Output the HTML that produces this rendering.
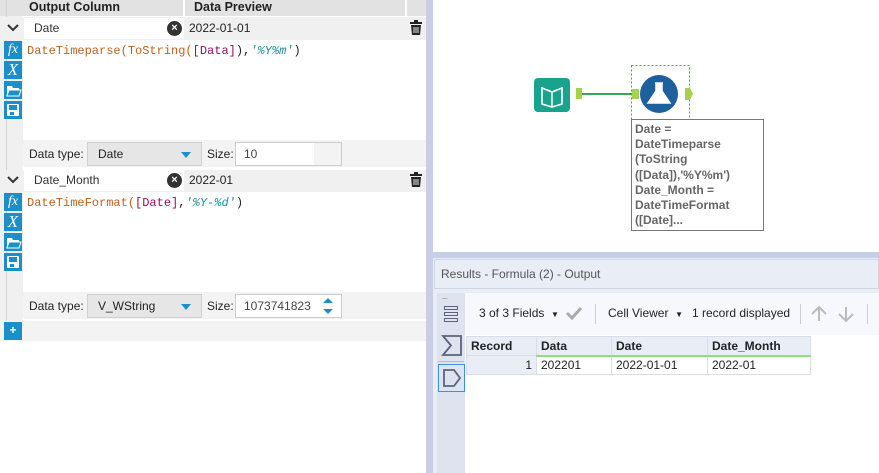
<!DOCTYPE html>
<html><head><meta charset="utf-8"><style>
*{box-sizing:border-box;margin:0;padding:0}
body{width:879px;height:473px;overflow:hidden;background:#fff;font-family:"Liberation Sans",sans-serif;font-size:12px;color:#222;position:relative}
.abs{position:absolute}
.mono{font-family:"Liberation Mono",monospace;font-size:12.5px}
.ib{position:absolute;left:4px;width:18px;height:18px;background:#1a8fc9;color:#fff;font-family:"Liberation Serif",serif;font-style:italic;font-size:14px;text-align:center;line-height:17px}
.sel{position:absolute;height:24px;background:#e6e6e6;border:1px solid #d0d0d0;padding:4px 10px;font-size:12px}
.num{position:absolute;height:24px;background:#fff;border:1px solid #ccc;padding:4px 8px;font-size:12px;color:#444}
.tri{position:absolute;width:0;height:0;border-left:5px solid transparent;border-right:5px solid transparent;border-top:6px solid #1a8fc9}
.xb{position:absolute;width:15px;height:15px;border-radius:50%;background:#333;color:#fff;font-size:11px;line-height:14px;text-align:center;font-weight:bold}
td,th{border:1px solid #d8dde8;padding:1px 4px;font-size:12px;text-align:left;height:19px}
</style></head><body>
<svg width="0" height="0" style="position:absolute"><defs>
<g id="trash"><rect x="1" y="2" width="12" height="2" fill="#222"/><rect x="5" y="0" width="4" height="2" fill="#222"/><path d="M2 5 h10 l-1 10 h-8 z" fill="#222"/><path d="M5 7 v6 M7 7 v6 M9 7 v6" stroke="#fff" stroke-width="0.9"/></g>
<g id="fold"><path d="M3 5 h5 l1 2 h6 v8 h-12 z" fill="#fff"/><path d="M5 9 h12 l-2 6 h-12 z" fill="#1a8fc9" stroke="#fff" stroke-width="1"/></g>
<g id="save"><rect x="3" y="3" width="12" height="12" rx="1" fill="#fff"/><rect x="5" y="4" width="8" height="5" fill="#1a8fc9"/><rect x="6" y="11" width="4" height="3" fill="#1a8fc9"/></g>
<g id="chev"><path d="M3 5 l5 5 l5 -5" fill="none" stroke="#333" stroke-width="2"/></g>
</defs></svg>
<!-- left panel -->
<div class="abs" style="left:0;top:0;width:426px;height:16px;background:#e2e2e2"></div>
<div class="abs" style="left:0;top:16px;width:23px;height:325px;background:#f0f0f0"></div>
<div class="abs" style="left:6px;top:0;width:1px;height:340px;background:#d6d6d6"></div>
<div class="abs" style="left:29px;top:0;font-weight:bold;font-size:12.5px;line-height:14px">Output Column</div>
<div class="abs" style="left:183px;top:0;width:2px;height:16px;background:#fff"></div>
<div class="abs" style="left:194px;top:0;font-weight:bold;font-size:12.5px;line-height:14px">Data Preview</div>
<div class="abs" style="left:405px;top:0;width:2px;height:16px;background:#fff"></div>

<!-- row 1 -->
<div class="abs" style="left:0;top:17px;width:426px;height:23px;background:#f0f0f0"></div>
<svg class="abs" style="left:5px;top:20px" width="16" height="16"><use href="#chev"/></svg>
<div class="abs" style="left:24px;top:18px;width:160px;height:21px;background:#fff;padding:3px 10px;font-size:12px;color:#333">Date</div>
<div class="xb" style="left:167px;top:21px">×</div>
<div class="abs" style="left:189px;top:21px;font-size:12px">2022-01-01</div>
<svg class="abs" style="left:409px;top:20px" width="14" height="16"><use href="#trash"/></svg>
<div class="abs" style="left:23px;top:40px;width:403px;height:100px;background:#fff"></div>
<div class="ib" style="top:41px">fx</div>
<div class="ib" style="top:61px;font-size:17px">X</div>
<svg class="ib" style="top:81px" width="18" height="18"><use href="#fold"/></svg>
<svg class="ib" style="top:101px" width="18" height="18"><use href="#save"/></svg>
<div class="abs mono" style="left:27px;top:44px;font-size:12px"><span style="color:#c0601a">DateTimeparse(ToString(</span><span style="color:#901060">[Data]</span>),<span style="color:#1a8fa0;font-style:italic">'%Y%m'</span>)</div>
<div class="abs" style="left:23px;top:140px;width:403px;height:27px;background:#f3f3f3"></div>
<div class="abs" style="left:29px;top:147px;font-size:12px">Data type:</div>
<div class="sel" style="left:87px;top:142px;width:115px">Date</div>
<div class="tri" style="left:181px;top:152px"></div>
<div class="abs" style="left:207px;top:147px;font-size:12px">Size:</div>
<div class="num" style="left:235px;top:142px;width:107px">10</div>
<div class="abs" style="left:314px;top:143px;width:27px;height:22px;background:#f3f3f3"></div>

<!-- row 2 -->
<div class="abs" style="left:0;top:170px;width:426px;height:22px;background:#f0f0f0"></div>
<svg class="abs" style="left:5px;top:172px" width="16" height="16"><use href="#chev"/></svg>
<div class="abs" style="left:24px;top:170px;width:160px;height:21px;background:#fff;padding:3px 10px;font-size:12px;color:#333">Date_Month</div>
<div class="xb" style="left:167px;top:173px">×</div>
<div class="abs" style="left:189px;top:173px;font-size:12px">2022-01</div>
<svg class="abs" style="left:409px;top:172px" width="14" height="16"><use href="#trash"/></svg>
<div class="ib" style="top:193px">fx</div>
<div class="ib" style="top:213px;font-size:17px">X</div>
<svg class="ib" style="top:233px" width="18" height="18"><use href="#fold"/></svg>
<svg class="ib" style="top:253px" width="18" height="18"><use href="#save"/></svg>
<div class="abs mono" style="left:27px;top:196px;font-size:12px"><span style="color:#c0601a">DateTimeFormat(</span><span style="color:#901060">[Date]</span>,<span style="color:#1a8fa0;font-style:italic">'%Y-%d'</span>)</div>
<div class="abs" style="left:23px;top:292px;width:403px;height:27px;background:#f3f3f3"></div>
<div class="abs" style="left:29px;top:299px;font-size:12px">Data type:</div>
<div class="sel" style="left:87px;top:294px;width:115px">V_WString</div>
<div class="tri" style="left:181px;top:304px"></div>
<div class="abs" style="left:207px;top:299px;font-size:12px">Size:</div>
<div class="num" style="left:235px;top:294px;width:107px">1073741823</div>
<div class="tri" style="left:323px;top:298px;border-top:none;border-bottom:5px solid #1a8fc9"></div>
<div class="tri" style="left:323px;top:309px;border-top:5px solid #1a8fc9"></div>
<div class="abs" style="left:0;top:321px;width:426px;height:20px;background:#f3f3f3"></div>
<div class="abs" style="left:4px;top:322px;width:18px;height:18px;background:#1a8fc9;color:#fff;text-align:center;font-weight:bold;line-height:17px">+</div>

<!-- dividers -->
<div class="abs" style="left:426px;top:0;width:7px;height:473px;background:#c6cfe6"></div>
<div class="abs" style="left:433px;top:252px;width:446px;height:6px;background:#c6cfe6"></div>

<!-- canvas -->
<svg class="abs" style="left:520px;top:60px" width="200" height="172">
<rect x="14" y="18" width="36" height="34" rx="4" fill="#1aa38c"/>
<path d="M22 28 L32 32 L42 28 L42 44 L32 47 L22 44 Z" fill="none" stroke="#fff" stroke-width="1.6"/>
<line x1="32" y1="32" x2="32" y2="47" stroke="#fff" stroke-width="1.4"/>
<rect x="56" y="28" width="6" height="11" fill="#a8d04a"/>
<line x1="62" y1="34" x2="114" y2="34" stroke="#3aa55a" stroke-width="2"/>
<rect x="112" y="29" width="7" height="10" fill="#a8d04a"/>
<rect x="111.5" y="5.5" width="58" height="55" fill="none" stroke="#3d8fe0" stroke-dasharray="2,2"/>
<circle cx="139" cy="34" r="19" fill="#1e5f9e"/>
<path d="M135 23 h8 M136 23 v8 l-8 12 h22 l-8 -12 v-8" fill="#fff" stroke="#fff" stroke-width="1.5"/>
<path d="M165 28 h5 l3 6 l-3 6 h-5 z" fill="#a8d04a"/>
</svg>
<div class="abs" style="left:631px;top:119px;width:133px;height:112px;border:1px solid #777;background:#fff;padding:2px 3px;font-size:12px;line-height:15.2px;color:#666;font-weight:bold">Date =<br>DateTimeparse<br>(ToString<br>([Data]),'%Y%m')<br>Date_Month =<br>DateTimeFormat<br>([Date]...</div>

<!-- results -->
<div class="abs" style="left:433px;top:258px;width:446px;height:215px;background:#e9edf6"></div>
<div class="abs" style="left:434px;top:259px;width:445px;height:30px;border:1px solid #cfd5e2;background:#e9edf6;padding:7px 6px;color:#555;font-size:12px">Results - Formula (2) - Output</div>
<div class="abs" style="left:437px;top:293px;width:28px;height:180px;background:#dde3ef"></div>
<div class="abs" style="left:441px;top:292px;font-size:8px;color:#999;letter-spacing:-1px">.....</div>
<div class="abs" style="left:444px;top:306px;width:14px;height:4px;border:1.5px solid #5a6478"></div>
<div class="abs" style="left:444px;top:312px;width:14px;height:4px;border:1.5px solid #5a6478"></div>
<div class="abs" style="left:444px;top:318px;width:14px;height:4px;border:1.5px solid #5a6478"></div>
<svg class="abs" style="left:441px;top:335px" width="22" height="22"><path d="M2 1 H20 V20 H2 L10 10.5 Z" fill="none" stroke="#5a6478" stroke-width="1.8"/></svg>
<div class="abs" style="left:438px;top:361px;width:26px;height:1px;background:#bbb"></div>
<div class="abs" style="left:438px;top:364px;width:27px;height:28px;border:1px solid #3d8fe0"></div>
<svg class="abs" style="left:442px;top:368px" width="20" height="20"><path d="M2 2 H12 L18 10 L12 18 H2 Z" fill="none" stroke="#5a6478" stroke-width="1.8"/></svg>
<div class="abs" style="left:465px;top:293px;width:414px;height:180px;background:#fff"></div>
<div class="abs" style="left:465px;top:293px;width:414px;height:42px;background:#f6f8fd"></div>
<div class="abs" style="left:479px;top:306px;font-size:12px">3 of 3 Fields &nbsp;<span style="font-size:8px">▼</span></div>
<svg class="abs" style="left:565px;top:305px" width="18" height="16"><path d="M2 8 l5 5 l9 -10" fill="none" stroke="#aaa" stroke-width="3"/></svg>
<div class="abs" style="left:595px;top:304px;width:1px;height:20px;background:#ccc"></div>
<div class="abs" style="left:608px;top:306px;font-size:12px">Cell Viewer &nbsp;<span style="font-size:8px">▼</span></div>
<div class="abs" style="left:692px;top:306px;font-size:12px">1 record displayed</div>
<div class="abs" style="left:800px;top:304px;width:1px;height:20px;background:#ccc"></div>
<svg class="abs" style="left:810px;top:305px" width="44" height="18"><path d="M9 16 V2 M2 9 L9 2 L16 9 M36 2 V16 M29 9 L36 16 L43 9" fill="none" stroke="#bbb" stroke-width="2"/></svg>
<div class="abs" style="left:867px;top:304px;width:1px;height:20px;background:#ccc"></div>
<table class="abs" style="left:466px;top:336px;border-collapse:collapse">
<tr style="background:#e9edf6;font-weight:bold"><th style="width:70px">Record</th><th style="width:75px;border-bottom:2px solid #8fe07a">Data</th><th style="width:96px;border-bottom:2px solid #8fe07a">Date</th><th style="width:103px;border-bottom:2px solid #8fe07a">Date_Month</th></tr>
<tr><td style="background:#e9edf6;text-align:right">1</td><td>202201</td><td>2022-01-01</td><td>2022-01</td></tr>
</table>
</body></html>
